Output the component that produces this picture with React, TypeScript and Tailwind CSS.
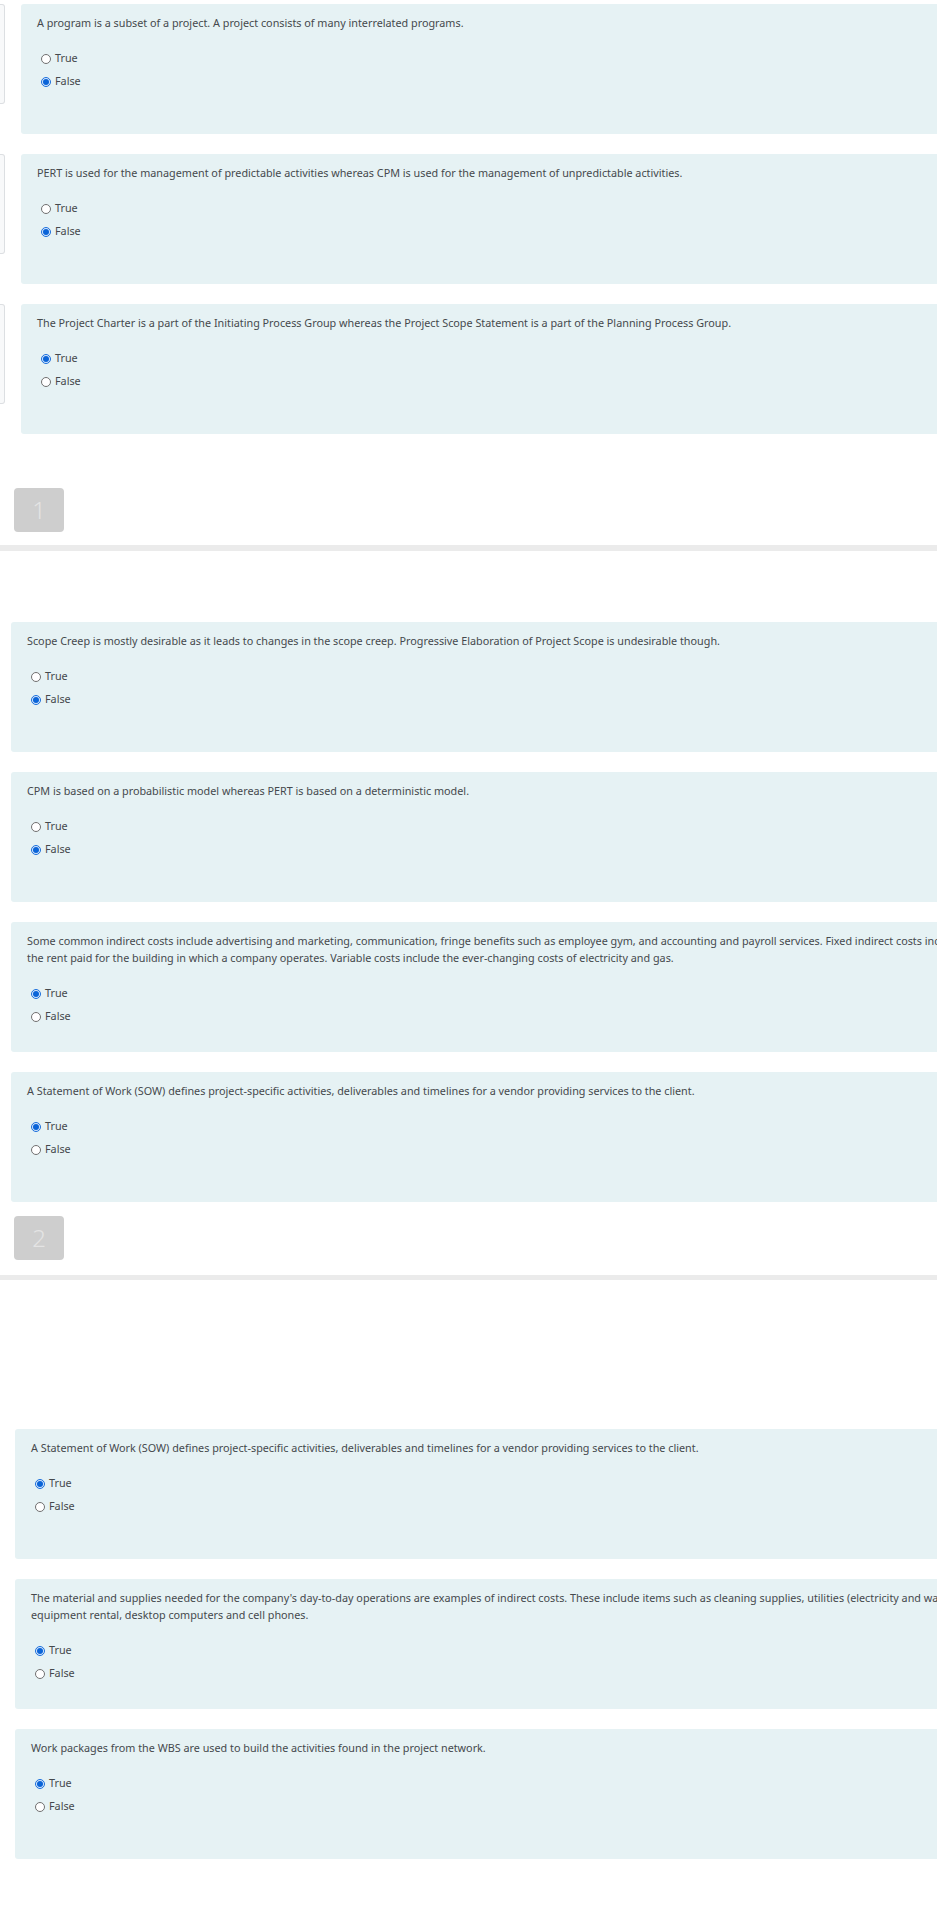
import React from "react";

type Q = { text: React.ReactNode; answer: boolean };

const section1: Q[] = [
  { text: "A program is a subset of a project. A project consists of many interrelated programs.", answer: false },
  { text: "PERT is used for the management of predictable activities whereas CPM is used for the management of unpredictable activities.", answer: false },
  { text: "The Project Charter is a part of the Initiating Process Group whereas the Project Scope Statement is a part of the Planning Process Group.", answer: true },
];

const section2: Q[] = [
  { text: "Scope Creep is mostly desirable as it leads to changes in the scope creep. Progressive Elaboration of Project Scope is undesirable though.", answer: false },
  { text: "CPM is based on a probabilistic model whereas PERT is based on a deterministic model.", answer: false },
  {
    text: (
      <>
        Some common indirect costs include advertising and marketing, communication, fringe benefits such as employee gym, and accounting and payroll services. Fixed indirect costs include
        <br />
        the rent paid for the building in which a company operates. Variable costs include the ever-changing costs of electricity and gas.
      </>
    ),
    answer: true,
  },
  { text: "A Statement of Work (SOW) defines project-specific activities, deliverables and timelines for a vendor providing services to the client.", answer: true },
];

const section3: Q[] = [
  { text: "A Statement of Work (SOW) defines project-specific activities, deliverables and timelines for a vendor providing services to the client.", answer: true },
  {
    text: (
      <>
        The material and supplies needed for the company's day-to-day operations are examples of indirect costs. These include items such as cleaning supplies, utilities (electricity and water),
        <br />
        equipment rental, desktop computers and cell phones.
      </>
    ),
    answer: true,
  },
  { text: "Work packages from the WBS are used to build the activities found in the project network.", answer: true },
];

function Radio({ checked }: { checked: boolean }) {
  if (checked) {
    return (
      <span className="flex h-[10px] w-[10px] shrink-0 items-center justify-center rounded-full border border-[#1a6fdc] bg-[#d7e7fb]">
        <span className="h-[6px] w-[6px] rounded-full bg-[#0a64d8]" />
      </span>
    );
  }
  return <span className="h-[10px] w-[10px] shrink-0 rounded-full border border-[#707070] bg-white" />;
}

function Option({ label, checked }: { label: string; checked: boolean }) {
  return (
    <div className="flex h-[23px] items-center pl-[4px]">
      <Radio checked={checked} />
      <span className="ml-[4px]">{label}</span>
    </div>
  );
}

function Card({ q }: { q: Q }) {
  return (
    <div className="min-h-[130px] w-[1400px] shrink-0 rounded-[3px] bg-[#e6f2f4] px-[16px] pt-[10px] pb-[10px]">
      <div className="whitespace-nowrap leading-[17px]">{q.text}</div>
      <div className="mt-[16px]">
        <Option label="True" checked={q.answer} />
        <Option label="False" checked={!q.answer} />
      </div>
    </div>
  );
}

function PageButton({ n }: { n: string }) {
  return (
    <div className="flex h-[44px] w-[50px] items-center justify-center rounded-[4px] bg-[#cecece] text-[24px] font-light leading-none text-[#e4e4e4]">
      {n}
    </div>
  );
}

export default function App() {
  return (
    <div
      className="w-[937px] min-h-[1920px] overflow-hidden bg-white text-[10.8px] text-[#45494d]"
      style={{ fontFamily: '"Noto Sans", "Open Sans", sans-serif' }}
    >
      {/* Section 1 */}
      <div className="flex flex-col gap-[20px] pt-[4px]">
        {section1.map((q, i) => (
          <div key={i} className="flex items-start">
            <div className="h-[100px] w-[5px] shrink-0 rounded-r-[3px] border-y border-r border-[#dcdfe2] bg-[#f8f9fa]" />
            <div className="ml-[16px]">
              <Card q={q} />
            </div>
          </div>
        ))}
      </div>

      <div className="ml-[14px] mt-[54px]">
        <PageButton n="1" />
      </div>
      <div className="mt-[13px] h-[6px] w-full bg-[#ebebeb]" />

      {/* Section 2 */}
      <div className="ml-[11px] mt-[71px] flex flex-col gap-[20px]">
        {section2.map((q, i) => (
          <Card key={i} q={q} />
        ))}
      </div>

      <div className="ml-[14px] mt-[14px]">
        <PageButton n="2" />
      </div>
      <div className="mt-[15px] h-[5px] w-full bg-[#ebebeb]" />

      {/* Section 3 */}
      <div className="ml-[15px] mt-[149px] flex flex-col gap-[20px]">
        {section3.map((q, i) => (
          <Card key={i} q={q} />
        ))}
      </div>
    </div>
  );
}
